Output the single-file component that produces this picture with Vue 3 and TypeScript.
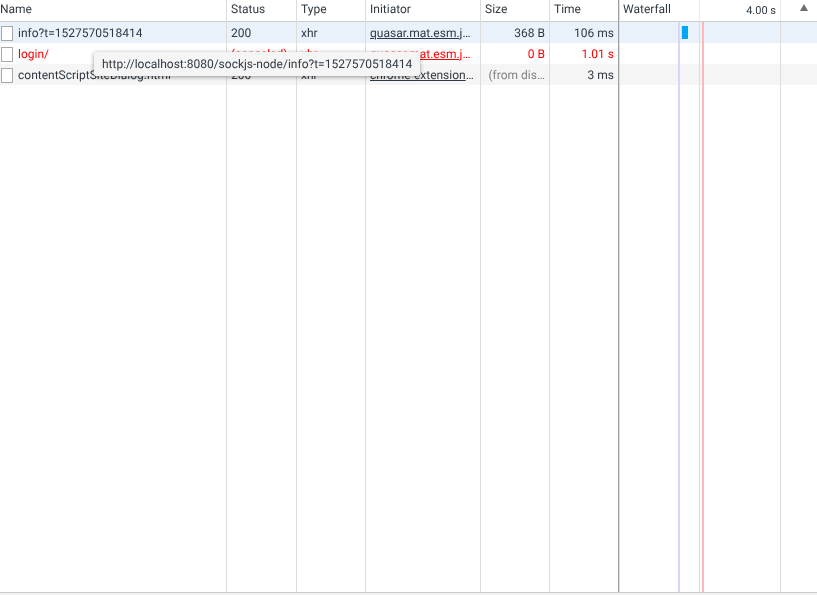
<script setup lang="ts">
interface Col { name: string; cls: string; right?: boolean; cells: { t: string; cls?: string }[] }
const cols: Col[] = [
  { name: 'Status', cls: 'c-status', cells: [{ t: '200' }, { t: '(canceled)', cls: 'err' }, { t: '200' }] },
  { name: 'Type', cls: 'c-type', cells: [{ t: 'xhr' }, { t: 'xhr', cls: 'err' }, { t: 'xhr' }] },
  { name: 'Initiator', cls: 'c-init', cells: [{ t: 'quasar.mat.esm.js:3', cls: 'link' }, { t: 'quasar.mat.esm.js:3', cls: 'link err' }, { t: 'chrome-extension://abc', cls: 'link' }] },
  { name: 'Size', cls: 'c-size', right: true, cells: [{ t: '368 B' }, { t: '0 B', cls: 'err' }, { t: '(from dis…', cls: 'muted' }] },
  { name: 'Time', cls: 'c-time', right: true, cells: [{ t: '106 ms' }, { t: '1.01 s', cls: 'err' }, { t: '3 ms' }] },
]
const names = [
  { t: 'info?t=1527570518414' },
  { t: 'login/', cls: 'err' },
  { t: 'contentScriptSiteDialog.html' },
]
const rowClasses = ['r-sel', 'r-plain', 'r-alt']
</script>

<template>
  <div class="panel">
    <div class="table">
      <div class="col c-name">
        <div class="head">Name</div>
        <div v-for="(n, i) in names" :key="n.t" class="cell" :class="rowClasses[i]">
          <span class="file"></span>
          <span class="txt" :class="n.cls">{{ n.t }}</span>
        </div>
      </div>
      <div v-for="c in cols" :key="c.name" class="col" :class="c.cls">
        <div class="head">{{ c.name }}</div>
        <div v-for="(x, i) in c.cells" :key="i" class="cell" :class="[rowClasses[i], { right: c.right }]">
          <span class="txt" :class="x.cls">{{ x.t }}</span>
        </div>
      </div>
      <div class="col c-wf">
        <div class="head wf-head">
          <span class="wf-a">Waterfall</span>
          <span class="wf-b">4.00 s</span>
          <span class="wf-c"><i class="tri"></i></span>
        </div>
        <div class="cell r-sel"></div>
        <div class="cell r-plain"></div>
        <div class="cell r-alt"></div>
        <i class="line blue"></i>
        <i class="line grid1"></i>
        <i class="line red"></i>
        <i class="line grid2"></i>
        <i class="bar-ghost"></i>
        <i class="bar"></i>
      </div>
    </div>
    <div class="tip">http://localhost:8080/sockjs-node/info?t=1527570518414</div>
  </div>
</template>

<style>
html, body { margin: 0; background: #fff; }
</style>

<style scoped>
.panel {
  position: relative;
  width: 817px;
  height: 595px;
  overflow: hidden;
  display: flex;
  flex-direction: column;
  font-family: Roboto, "Liberation Sans", sans-serif;
  font-size: 12px;
  text-rendering: geometricPrecision;
  color: #303942;
  will-change: transform;
}
.panel::after {
  content: "";
  flex: none;
  height: 3px;
  box-sizing: border-box;
  border-top: 1px solid #cccccc;
  background: #f3f3f3;
}
.table { display: flex; flex: 1; min-height: 0; }
.col {
  position: relative;
  box-sizing: border-box;
  border-right: 1px solid #dcdcdc;
  flex: none;
}
.c-name { width: 227px; }
.c-status { width: 70px; }
.c-type { width: 69px; }
.c-init { width: 115px; }
.c-size { width: 69px; }
.c-time {
  width: 69px;
  border-right: 1px solid #a0a0a0;
  box-shadow: 1px 0 0 #dedede;
  z-index: 1;
}
.c-wf { flex: 1; border-right: 0; }
.head {
  box-sizing: border-box;
  height: 22px;
  line-height: 17px;
  padding: 1px 4px 0;
  border-bottom: 1px solid #cdcdcd;
  color: #303942;
  white-space: nowrap;
  overflow: hidden;
}
.c-name .head { padding-left: 0; }
.cell {
  box-sizing: border-box;
  height: 21px;
  line-height: 19px;
  padding: 1px 4px 0;
  display: flex;
  align-items: center;
  white-space: nowrap;
  overflow: hidden;
}
.cell.right { justify-content: flex-end; }
.txt { overflow: hidden; text-overflow: ellipsis; }
.r-sel { background: #e9f1fa; }
.r-alt { background: #f5f5f5; }
.err { color: #f00; }
.muted { color: #808080; }
.link { text-decoration: underline; }
.c-name .cell { padding-left: 1px; }
.file {
  flex: none;
  box-sizing: border-box;
  width: 12px;
  height: 15px;
  margin-right: 5px;
  background: #fff;
  border: 1px solid #a8a8a8;
}
.wf-head { display: flex; padding: 0; }
.wf-a {
  width: 81px;
  padding: 1px 0 0 4px;
  box-sizing: border-box;
  border-right: 1px solid #ececec;
}
.wf-b {
  width: 81px;
  box-sizing: border-box;
  border-right: 1px solid #ececec;
  text-align: right;
  padding: 1px 4px 0 0;
  font-size: 11px;
  line-height: 20px;
}
.wf-c { flex: 1; position: relative; }
.tri {
  position: absolute;
  left: 19px;
  top: 4px;
  border-left: 4px solid transparent;
  border-right: 4px solid transparent;
  border-bottom: 7px solid #6e6e6e;
}
.line { position: absolute; top: 22px; bottom: 0; width: 1px; }
.blue { left: 59px; width: 2px; background: #d6d6fb; }
.grid1 { left: 80px; background: #dcdcdc; }
.red { left: 83px; width: 2px; background: #ffb8b8; }
.grid2 { left: 161px; background: #dcdcdc; }
.bar-ghost { position: absolute; left: 62px; top: 26px; width: 1px; height: 13px; background: #d5e2ee; }
.bar { position: absolute; left: 63px; top: 26px; width: 6px; height: 13px; background: #00a6f0; }
.tip {
  position: absolute;
  left: 94px;
  top: 52px;
  height: 24px;
  line-height: 24px;
  padding: 0 8px;
  background: #f5f5f5;
  white-space: nowrap;
  border-radius: 2px;
  box-shadow: 0 1px 4px rgba(0, 0, 0, 0.4);
  color: #303942;
}
</style>
